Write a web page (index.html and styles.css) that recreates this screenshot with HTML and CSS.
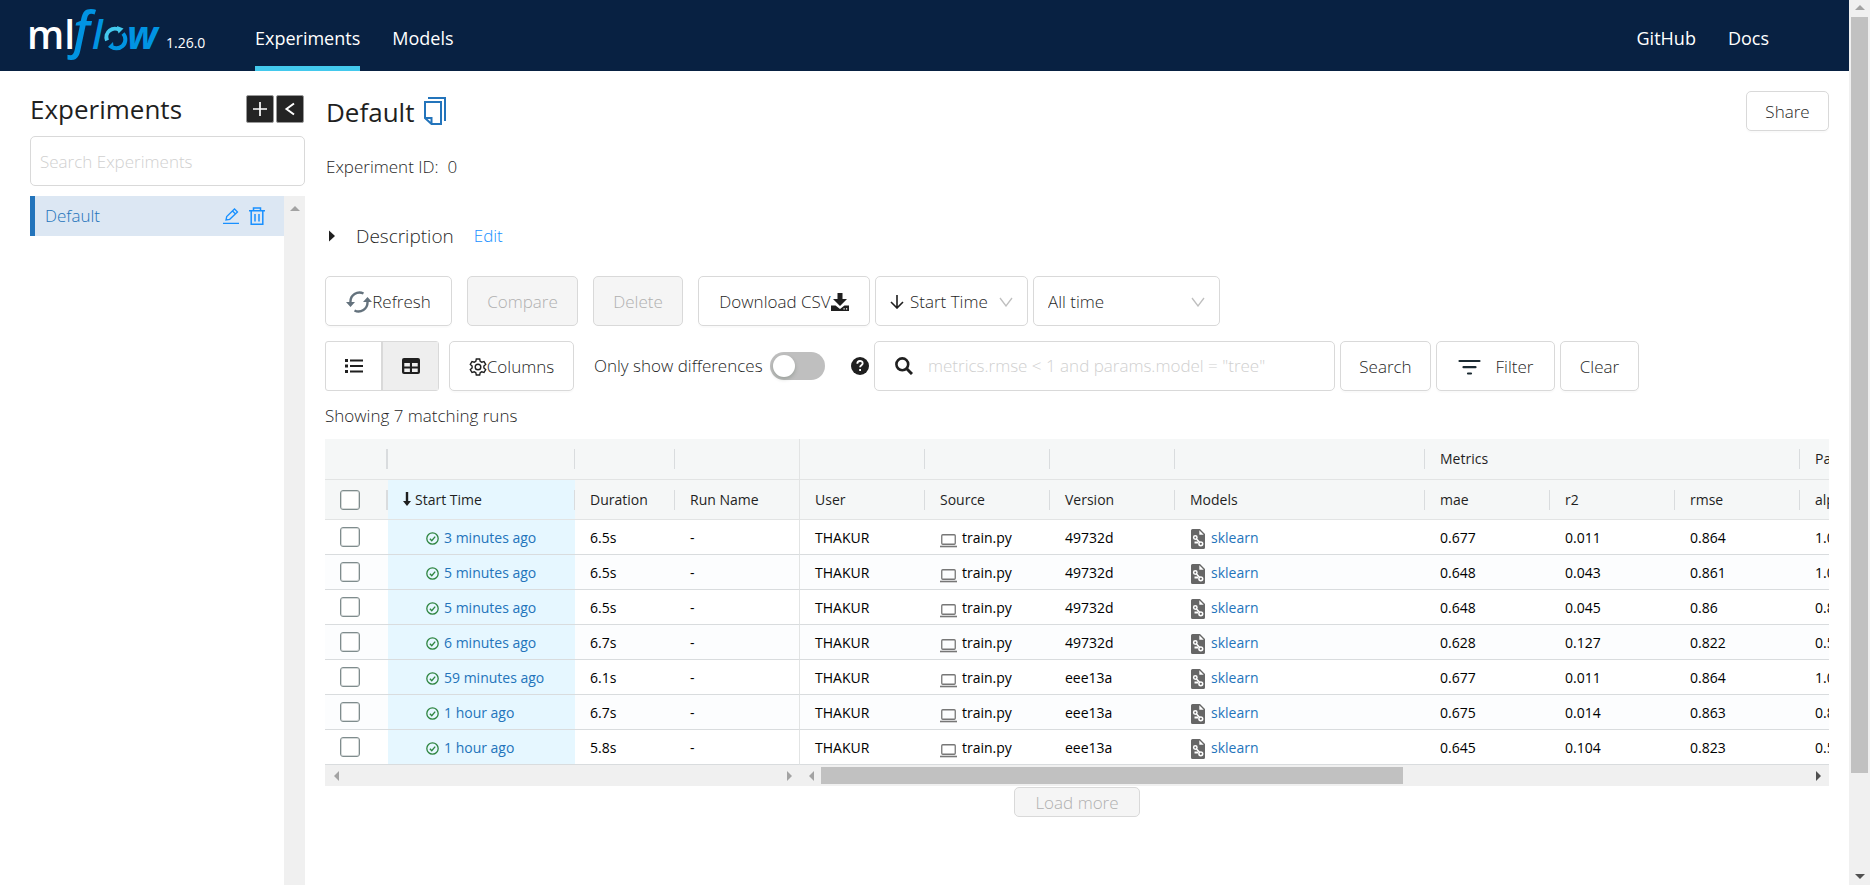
FILE: index.html
```
<!DOCTYPE html>
<html lang="en">
<head>
  <meta charset="UTF-8" />
  <meta name="viewport" content="width=device-width, initial-scale=1.0"/>
  <title>MLflow</title>
  <link rel="stylesheet" href="styles.css">
</head>
<body>
  <!-- icon sprite -->
  <svg class="sprite" width="0" height="0">
    <symbol id="i-check" viewBox="0 0 16 16">
      <circle cx="8" cy="8" r="7" fill="none" stroke="currentColor" stroke-width="1.6"/>
      <path d="M4.8 8.2l2.3 2.500 4.200-5" fill="none" stroke="currentColor" stroke-width="1.700"/>
    </symbol>
    <symbol id="i-laptop" viewBox="0 0 17 14">
      <rect x="1.750" y="0.750" width="13.500" height="9.500" rx="1" fill="none" stroke="currentColor" stroke-width="1.300"/>
      <path d="M0 11.700h17v1.600H0z" fill="currentColor"/>
    </symbol>
    <symbol id="i-model" viewBox="0 0 14 20">
      <path d="M1.500 0H9l5 5v13.500a1.500 1.500 0 0 1-1.500 1.500h-11A1.500 1.500 0 0 1 0 18.500v-17A1.500 1.500 0 0 1 1.500 0z" fill="currentColor"/>
      <path d="M8.300 1.300v4.400h4.400z" fill="#fff"/>
      <g fill="none" stroke="#fff" stroke-width="1.500">
        <circle cx="4.300" cy="8.500" r="1.700"/>
        <circle cx="9.800" cy="14.800" r="1.900"/>
        <path d="M5.500 10l3 3.300"/>
        <path d="M3.500 13.500h3.500" stroke-width="2"/>
      </g>
    </symbol>
    <symbol id="i-chevron" viewBox="0 0 14 10">
      <path d="M1 1l6 8 6-8" fill="none" stroke="#bfbfbf" stroke-width="1.300"/>
    </symbol>
    <symbol id="i-up" viewBox="0 0 10 10"><path d="M0 8l5-5 5 5z" fill="currentColor"/></symbol>
    <symbol id="i-down" viewBox="0 0 10 10"><path d="M0 3l5 5 5-5z" fill="currentColor"/></symbol>
    <symbol id="i-left" viewBox="0 0 10 10"><path d="M8 0L3 5l5 5z" fill="currentColor"/></symbol>
    <symbol id="i-right" viewBox="0 0 10 10"><path d="M3 0l5 5-5 5z" fill="currentColor"/></symbol>
  </svg>

  <div class="window">
    <div class="app">
      <header class="topbar">
        <a class="logo" href="#" aria-label="mlflow">
          <svg width="136" height="71" viewBox="0 0 136 71">
            <text class="logo-ml" x="1" y="49">ml</text>
            <text class="logo-f" x="47" y="48">f</text>
            <text class="logo-l" x="66" y="49">l</text>
            <g fill="none" stroke-width="4">
              <path d="M94 30.500a8.500 8.500 0 0 0-13 10" stroke="#43c9ed"/>
              <path d="M84 45.500a8.500 8.500 0 0 0 13-12" stroke="#0194e2"/>
            </g>
            <path d="M91 26l6.500 2.500-5 5z" fill="#43c9ed"/>
            <path d="M88 50l-6-3 5-5z" fill="#0194e2"/>
            <text class="logo-w" x="101" y="49">w</text>
          </svg>
        </a>
        <span class="version">1.26.0</span>
        <nav class="nav">
          <a class="active" href="#">Experiments</a>
          <a href="#">Models</a>
        </nav>
        <nav class="nav nav-right">
          <a href="#">GitHub</a>
          <a href="#">Docs</a>
        </nav>
      </header>

      <div class="body">
        <aside class="sidebar">
          <div class="sidebar-head">
            <h1>Experiments</h1>
            <button class="icon-btn" aria-label="New experiment">
              <svg width="16" height="16" viewBox="0 0 16 16"><path d="M8 1v14M1 8h14" stroke="#fff" stroke-width="1.700"/></svg>
            </button>
            <button class="icon-btn" aria-label="Collapse">
              <svg width="16" height="16" viewBox="0 0 16 16"><path d="M12 2.500L4.500 8 12 13.500" fill="none" stroke="#fff" stroke-width="2"/></svg>
            </button>
          </div>
          <input class="search-exp" type="text" placeholder="Search Experiments" aria-label="Search Experiments">
          <div class="exp-scroll">
            <div class="exp-list">
              <div class="exp-item">
                <a href="#">Default</a>
                <button class="plain" aria-label="Rename">
                  <svg width="16" height="16" viewBox="0 0 16 16" fill="none" stroke="#1890ff" stroke-width="1.300"><path d="M0 15.300h16M3 12l0.700-3.500L11.500 1l3 3-7.800 7.300zM9.500 3l3 3"/></svg>
                </button>
                <button class="plain" aria-label="Delete experiment">
                  <svg width="16" height="18" viewBox="0 0 16 18" fill="none" stroke="#1890ff" stroke-width="1.500"><path d="M0 3.700h16M4.500 3.500V1h7v2.500M2.200 4v13.200h11.600V4M6 7v7.500M10 7v7.500"/></svg>
                </button>
              </div>
            </div>
            <div class="vtrack"><svg width="10" height="10"><use href="#i-up"/></svg></div>
          </div>
        </aside>

        <main class="main">
          <div class="title-row">
            <h1>Default</h1>
            <button class="plain" aria-label="Copy name">
              <svg width="22" height="28" viewBox="0 0 22 28" fill="none" stroke="#2374bb" stroke-width="2"><path d="M4 1h17v23M1 5h16v22H7.500L1 21zM1.500 21h6v5.500"/></svg>
            </button>
            <button class="btn share">Share</button>
          </div>
          <p class="exp-id">Experiment ID:&nbsp; 0</p>
          <div class="description">
            <svg width="8" height="12" viewBox="0 0 8 12"><path d="M1 0.500L7 6l-6 5.500z" fill="#1f1f1f"/></svg>
            <span>Description</span>
            <a href="#">Edit</a>
          </div>

          <div class="toolbar">
            <button class="btn refresh">
              <svg width="26" height="22" viewBox="0 0 26 22">
                <g fill="none" stroke="#64727d" stroke-width="2.400"><path d="M17.500 2.500A9 9 0 0 0 4.500 11M8.500 19.500A9 9 0 0 0 21.500 11"/></g>
                <path d="M0 11h9l-4.500 5zM17 11h9l-4.500-5z" fill="#64727d"/>
              </svg>Refresh
            </button>
            <button class="btn compare" disabled>Compare</button>
            <button class="btn delete" disabled>Delete</button>
            <div class="group">
              <button class="btn download">Download CSV<svg width="18" height="18" viewBox="0 0 18 18" fill="#1f1f1f"><path d="M6.500 0h5v6H16l-7 7-7-7h4.500zM0 12.500h4.500L9 16l4.500-3.500H18V18H0z"/><path d="M12.500 15.300h1.200v1.200h-1.200zM15 15.300h1.200v1.200H15z" fill="#fff"/></svg></button>
              <div class="select sort">
                <svg width="14" height="14" viewBox="0 0 14 14" fill="none" stroke="#1f1f1f" stroke-width="1.600"><path d="M7 0v13M1 7l6 6 6-6"/></svg>
                <select aria-label="Sort by"><option>Start Time</option></select>
                <svg width="14" height="10"><use href="#i-chevron"/></svg>
              </div>
              <div class="select time">
                <select aria-label="Time range"><option>All time</option></select>
                <svg width="14" height="10"><use href="#i-chevron"/></svg>
              </div>
            </div>
          </div>

          <div class="toolbar">
            <div class="view-switch">
              <button aria-label="List view">
                <svg width="18" height="16" viewBox="0 0 18 16" fill="#1f1f1f"><path d="M0 1h3v3H0zM0 6.500h3v3H0zM0 12h3v3H0zM5 1.500h13v2H5zM5 7h13v2H5zM5 12.500h13v2H5z"/></svg>
              </button>
              <button class="on" aria-label="Table view">
                <svg width="18" height="16" viewBox="0 0 18 16"><rect width="18" height="16" rx="2" fill="#1f1f1f"/><path d="M2.300 5h5.600v3.500H2.300zM10 5h5.700v3.500H10zM2.300 10.500h5.600V14H2.300zM10 10.500h5.700V14H10z" fill="#eee"/></svg>
              </button>
            </div>
            <button class="btn columns">
              <svg width="18" height="18" viewBox="0 0 18 18" fill="none" stroke="#1f1f1f" stroke-width="1.400"><path d="M7.300 1h3.400l0.500 2.300 1.500 0.900 2.300-0.700 1.700 2.900-1.800 1.600v2l1.800 1.600-1.700 2.900-2.300-0.700-1.500 0.900-0.500 2.300H7.300l-0.500-2.300-1.500-0.900-2.300 0.700-1.700-2.900L3.100 10V8L1.300 6.400 3 3.500l2.300 0.700 1.500-0.900z"/><circle cx="9" cy="9" r="2.800"/></svg>Columns
            </button>
            <label class="diff" for="diff">Only show differences <input id="diff" class="switch" type="checkbox"></label>
            <div class="group searchbar">
              <svg class="help" width="18" height="18" viewBox="0 0 18 18"><circle cx="9" cy="9" r="9" fill="#1f1f1f"/><path d="M6.300 6.800c0-3.800 5.400-3.500 5.400-0.500 0 2-2.600 2-2.600 4M9.100 12v2" fill="none" stroke="#fff" stroke-width="1.800"/></svg>
              <div class="search">
                <svg width="18" height="18" viewBox="0 0 18 18" fill="none" stroke="#1f1f1f"><circle cx="7.300" cy="7.300" r="5.900" stroke-width="2.600"/><path d="M11.500 11.500l5.500 5.500" stroke-width="3"/></svg>
                <input type="text" placeholder='metrics.rmse &lt; 1 and params.model = "tree"' aria-label="Search runs">
              </div>
              <button class="btn search-btn">Search</button>
              <button class="btn filter">
                <svg width="23" height="16" viewBox="0 0 23 16" stroke="#1b2a32" stroke-width="2.200" stroke-linecap="round"><path d="M1.500 2h20M5.500 8.200h12M10 14.500h3"/></svg>Filter
              </button>
              <button class="btn clear">Clear</button>
            </div>
          </div>

          <p class="count">Showing 7 matching runs</p>

          <div class="grid">
            <table>
              <colgroup>
                <col class="c-check"><col class="c-start"><col class="c-dur"><col class="c-name">
                <col class="c-std"><col class="c-std"><col class="c-std"><col class="c-models">
                <col class="c-std"><col class="c-std"><col class="c-std"><col class="c-std">
              </colgroup>
              <thead>
                <tr class="groups">
                  <th class="thick"></th><th></th><th></th><th class="pin"></th>
                  <th></th><th></th><th></th><th></th>
                  <th colspan="3">Metrics</th><th>Parameters</th>
                </tr>
                <tr>
                  <th class="thick"><input type="checkbox" aria-label="Select all runs"></th>
                  <th class="start"><svg width="8" height="14" viewBox="0 0 8 14" fill="#1f1f1f"><path d="M2.800 0h2.400v9H8l-4 5-4-5h2.800z"/></svg>Start Time</th>
                  <th>Duration</th>
                  <th class="pin">Run Name</th>
                  <th>User</th><th>Source</th><th>Version</th><th>Models</th>
                  <th>mae</th><th>r2</th><th>rmse</th><th>alpha</th>
                </tr>
              </thead>
              <tbody id="runs"></tbody>
            </table>
            <div class="hscroll">
              <div class="htrack pinned">
                <svg width="10" height="10"><use href="#i-left"/></svg>
                <svg width="10" height="10"><use href="#i-right"/></svg>
              </div>
              <div class="htrack">
                <svg width="10" height="10"><use href="#i-left"/></svg>
                <div class="hlane"><div class="hthumb"></div></div>
                <svg class="dark" width="10" height="10"><use href="#i-right"/></svg>
              </div>
            </div>
          </div>
          <button class="btn load-more" disabled>Load more</button>
        </main>
      </div>
    </div>

    <div class="page-scroll">
      <svg width="10" height="10"><use href="#i-up"/></svg>
      <div class="vlane"><div class="vthumb"></div></div>
      <svg class="dark" width="10" height="10"><use href="#i-down"/></svg>
    </div>
  </div>

  <script>
    const runs = [
      ['3 minutes ago', '6.5s', '49732d', '0.677', '0.011', '0.864', '1.0'],
      ['5 minutes ago', '6.5s', '49732d', '0.648', '0.043', '0.861', '1.0'],
      ['5 minutes ago', '6.5s', '49732d', '0.648', '0.045', '0.86', '0.8'],
      ['6 minutes ago', '6.7s', '49732d', '0.628', '0.127', '0.822', '0.5'],
      ['59 minutes ago', '6.1s', 'eee13a', '0.677', '0.011', '0.864', '1.0'],
      ['1 hour ago', '6.7s', 'eee13a', '0.675', '0.014', '0.863', '0.8'],
      ['1 hour ago', '5.8s', 'eee13a', '0.645', '0.104', '0.823', '0.5']
    ];

    document.getElementById('runs').innerHTML = runs.map(([start, duration, version, mae, r2, rmse, alpha]) => `
      <tr>
        <td class="check"><input type="checkbox" aria-label="Select run"></td>
        <td class="start"><svg class="ok" width="13" height="13"><use href="#i-check"/></svg><a href="#">${start}</a></td>
        <td>${duration}</td>
        <td class="pin">-</td>
        <td>THAKUR</td>
        <td><svg class="source" width="17" height="14"><use href="#i-laptop"/></svg>train.py</td>
        <td>${version}</td>
        <td><svg class="model" width="14" height="20"><use href="#i-model"/></svg><a href="#">sklearn</a></td>
        <td>${mae}</td>
        <td>${r2}</td>
        <td>${rmse}</td>
        <td>${alpha}</td>
      </tr>
    `).join('');
  </script>
</body>
</html>
```
FILE: styles.css
```
* {
  box-sizing: border-box;
}

body {
  margin: 0;
  font-family: "Segoe UI", "Open Sans", "Noto Sans", sans-serif;
  font-size: 17px;
  font-weight: 350;
  line-height: 24px;
  color: #1f1f1f;
  background: #fff;
}

a {
  color: #2374bb;
  text-decoration: none;
}

button, input, select {
  font: inherit;
  color: inherit;
}

h1 {
  margin: 0;
  font-size: 26px;
  line-height: 32px;
  font-weight: 500;
}

p {
  margin: 0;
}

svg {
  flex: none;
}

.sprite {
  position: absolute;
}

.window {
  display: flex;
  height: 100vh;
  overflow: hidden;
}

.app {
  flex: 1;
  min-width: 0;
  display: flex;
  flex-direction: column;
}

/* top bar */
.topbar {
  flex: none;
  display: flex;
  height: 71px;
  padding: 0 80px 0 26px;
  background: #082142;
}

.logo svg {
  display: block;
}

.logo text {
  font-family: "Open Sans", sans-serif;
  font-size: 39px;
  font-weight: 600;
  fill: #fff;
}

.logo .logo-f,
.logo .logo-l,
.logo .logo-w {
  font-style: italic;
  fill: #0194e2;
}

.logo .logo-f {
  font-size: 50px;
}

.logo .logo-w {
  font-weight: 700;
}

.version {
  width: 40px;
  margin: 31px 49px 0 4px;
  font-size: 14px;
  font-weight: 400;
  color: #fff;
}

.nav {
  display: flex;
  gap: 32px;
}

.nav a {
  height: 71px;
  padding-top: 26px;
  font-size: 18px;
  font-weight: 500;
  color: #fff;
}

.nav .active {
  border-bottom: 5px solid #43c9ed;
}

.nav-right {
  margin-left: auto;
}

/* sidebar */
.body {
  flex: 1;
  min-height: 0;
  display: flex;
  gap: 20px;
  padding: 0 20px 0 30px;
}

.sidebar {
  flex: none;
  width: 275px;
  display: flex;
  flex-direction: column;
  padding-top: 20px;
}

.sidebar-head {
  display: flex;
  align-items: center;
  gap: 2px;
  height: 36px;
  margin-bottom: 9px;
  padding-right: 1px;
}

.sidebar-head h1 {
  margin-right: auto;
}

.icon-btn {
  display: flex;
  align-items: center;
  justify-content: center;
  width: 28px;
  height: 28px;
  padding: 0;
  background: #242424;
  border: 1px solid #999;
  border-radius: 2px;
}

.search-exp {
  width: 100%;
  height: 50px;
  margin-bottom: 10px;
  padding: 0 9px;
  border: 1px solid #d9d9d9;
  border-radius: 5px;
}

input::placeholder {
  color: #d0d0d0;
  opacity: 1;
}

.exp-scroll {
  flex: 1;
  display: flex;
}

.exp-list {
  flex: 1;
}

.exp-item {
  display: flex;
  align-items: center;
  gap: 10px;
  height: 40px;
  padding: 0 19px 0 10px;
  background: #dce7f3;
  border-left: 5px solid #2374bb;
}

.exp-item a {
  margin-right: auto;
}

.plain {
  display: flex;
  padding: 0;
  background: none;
  border: 0;
}

.vtrack {
  width: 21px;
  padding-top: 6px;
  text-align: center;
  line-height: 10px;
  color: #a3a3a3;
  background: #f0f0f0;
}

/* main column */
.main {
  flex: 1;
  min-width: 0;
  padding-top: 20px;
}

.title-row {
  display: flex;
  align-items: center;
  gap: 10px;
  height: 40px;
  margin-bottom: 24px;
}

.title-row h1 {
  padding: 2px 0 0 1px;
}

.btn {
  display: flex;
  align-items: center;
  justify-content: center;
  flex: none;
  height: 50px;
  padding: 2px 0 0;
  background: #fff;
  border: 1px solid #d9d9d9;
  border-radius: 5px;
  box-shadow: 0 2px 1px rgba(0, 0, 0, 0.02);
  white-space: nowrap;
}

.btn:disabled {
  color: #b0b0b0;
  background: #f5f5f5;
  box-shadow: none;
}

.share {
  width: 83px;
  height: 40px;
  margin-left: auto;
}

.exp-id {
  padding-left: 1px;
}

.description {
  display: flex;
  align-items: center;
  gap: 20px;
  margin: 45px 0 28px 3px;
}

.description span {
  font-size: 19px;
}

.description a {
  color: #1890ff;
}

.toolbar {
  display: flex;
  gap: 15px;
  margin-bottom: 15px;
}

.group {
  display: flex;
  gap: 5px;
}

.refresh { width: 127px; }
.compare { width: 111px; }
.delete { width: 90px; }
.download { width: 172px; }
.search-btn { width: 91px; }
.clear { width: 79px; }

.select {
  display: flex;
  align-items: center;
  gap: 6px;
  height: 50px;
  padding: 2px 14px 0;
  border: 1px solid #d9d9d9;
  border-radius: 5px;
}

.select select {
  flex: 1;
  min-width: 0;
  padding: 0;
  appearance: none;
  background: none;
  border: 0;
}

.sort { width: 153px; }
.time { width: 187px; }

.view-switch {
  display: flex;
  width: 114px;
  height: 50px;
  margin-right: -5px;
  border: 1px solid #d9d9d9;
  border-radius: 3px;
}

.view-switch button {
  display: flex;
  align-items: center;
  justify-content: center;
  flex: 1;
  padding: 0;
  background: none;
  border: 0;
}

.view-switch .on {
  background: #eee;
  border-left: 2px solid #d9d9d9;
}

.columns {
  width: 125px;
}

.diff {
  display: flex;
  align-items: center;
  justify-content: space-between;
  width: 231px;
  margin: 0 11px 0 5px;
  white-space: nowrap;
}

.switch {
  appearance: none;
  width: 55px;
  height: 28px;
  margin: 0;
  padding: 3px;
  background: #bfbfbf;
  border-radius: 14px;
}

.switch::before {
  content: "";
  display: block;
  width: 22px;
  height: 22px;
  background: #fff;
  border-radius: 50%;
  box-shadow: 0 2px 4px rgba(0, 35, 11, 0.2);
}

.searchbar {
  align-items: center;
}

.search {
  display: flex;
  align-items: center;
  gap: 15px;
  width: 461px;
  height: 50px;
  padding: 0 20px;
  border: 1px solid #d9d9d9;
  border-radius: 5px;
}

.search input {
  flex: 1;
  min-width: 0;
  padding: 0;
  border: 0;
}

.filter {
  width: 119px;
  gap: 15px;
}

.count {
  margin: -2px 0 11px;
}

/* runs table */
.grid {
  overflow: hidden;
}

table {
  width: 1600px;
  table-layout: fixed;
  border-collapse: separate;
  border-spacing: 0;
  font-size: 14px;
  font-weight: 400;
  line-height: 20px;
}

.c-check { width: 63px; }
.c-start { width: 187px; }
.c-dur { width: 100px; }
.c-name, .c-std { width: 125px; }
.c-models { width: 250px; }

th, td {
  padding: 0 15px;
  text-align: left;
  white-space: nowrap;
}

th {
  height: 40px;
  font-weight: 500;
  border-bottom: 1px solid #e2e4e4;
  /* short divider in the middle of the cell */
  background: linear-gradient(#d9dcde, #d9dcde) right center / 1px 20px no-repeat #f5f7f7;
}

.groups th {
  height: 41px;
}

th.thick {
  background-size: 2px 20px;
}

th.start {
  background-color: #e6f7ff;
}

th.start svg {
  margin-right: 4px;
  vertical-align: -1px;
}

td {
  height: 35px;
  padding-top: 2px;
  color: #000;
  border-bottom: 1px solid #d9dcde;
}

td.check {
  padding-top: 0;
}

tbody tr:nth-child(even) {
  background: #fcfdfe;
}

td.start {
  padding-left: 38px;
  background: #e6f7ff;
}

.pin {
  border-right: 1px solid #e2e4e4;
}

th.pin {
  background: #f5f7f7;
}

table input {
  display: block;
  appearance: none;
  width: 20px;
  height: 20px;
  margin: 0;
  background: #fff;
  border: 1px solid #7f8c8d;
  border-radius: 3px;
  box-shadow: inset 0 0 0 1px #d5d9d9;
}

.ok {
  margin-right: 5px;
  vertical-align: -2px;
  color: #2e8540;
}

.source {
  margin-right: 5px;
  vertical-align: -5px;
  color: #777;
}

.model {
  margin: 0 6px 0 1px;
  vertical-align: -6px;
  color: #666;
}

.hscroll {
  display: flex;
}

.htrack {
  flex: 1;
  display: flex;
  align-items: center;
  justify-content: space-between;
  gap: 5px;
  height: 21px;
  padding: 0 6px;
  color: #a3a3a3;
  background: #f0f0f0;
}

.pinned {
  flex: none;
  width: 475px;
}

.hlane {
  flex: 1;
}

.hthumb {
  width: 59%;
  height: 17px;
  background: #c1c1c1;
}

.dark {
  color: #505050;
}

.load-more {
  width: 126px;
  height: 30px;
  margin: 1px auto 0;
}

/* page scrollbar */
.page-scroll {
  flex: none;
  display: flex;
  flex-direction: column;
  align-items: center;
  gap: 5px;
  width: 21px;
  padding: 2px 0 4px;
  color: #a3a3a3;
  background: #f0f0f0;
}

.vlane {
  flex: 1;
  width: 17px;
}

.vthumb {
  height: 89%;
  background: #c1c1c1;
}
```
